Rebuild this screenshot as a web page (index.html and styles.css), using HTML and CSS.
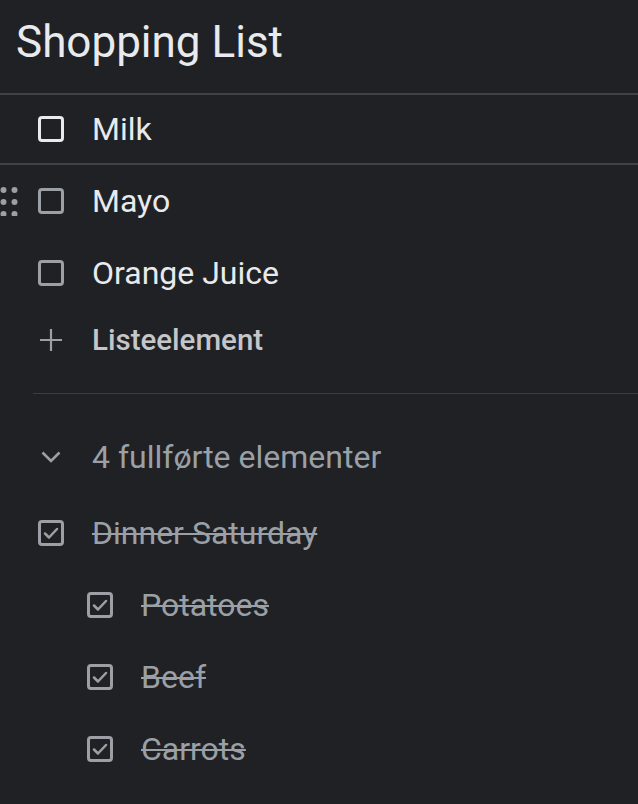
FILE: index.html
```html
<!DOCTYPE html>
<html lang="nb">
<head>
    <meta charset="UTF-8">
    <meta name="viewport" content="width=device-width, initial-scale=1.0">
    <title>Shopping List</title>
    <link rel="stylesheet" href="styles.css">
</head>
<body>
    <div class="note">
        <h1 class="title">Shopping List</h1>

        <div class="pinned">
            <div class="item">
                <span class="handle"></span>
                <svg class="box box-light" viewBox="0 0 26 26"><rect x="1.5" y="1.5" width="23" height="23" rx="2.5"/></svg>
                <span class="label">Milk</span>
            </div>
        </div>

        <div class="open">
            <div class="item">
                <span class="handle">
                    <svg viewBox="0 0 18 30" width="18" height="30">
                        <circle cx="3.5" cy="4" r="3"/><circle cx="14.5" cy="4" r="3"/>
                        <circle cx="3.5" cy="16" r="3"/><circle cx="14.5" cy="16" r="3"/>
                        <circle cx="3.5" cy="28" r="3"/><circle cx="14.5" cy="28" r="3"/>
                    </svg>
                </span>
                <svg class="box" viewBox="0 0 26 26"><rect x="1.5" y="1.5" width="23" height="23" rx="2.5"/></svg>
                <span class="label">Mayo</span>
            </div>
            <div class="item">
                <span class="handle"></span>
                <svg class="box" viewBox="0 0 26 26"><rect x="1.5" y="1.5" width="23" height="23" rx="2.5"/></svg>
                <span class="label">Orange Juice</span>
            </div>
            <div class="item add">
                <span class="handle"></span>
                <svg class="plus" viewBox="0 0 26 26"><path d="M13 2v22M2 13h22"/></svg>
                <span class="label">Listeelement</span>
            </div>
        </div>

        <div class="done">
            <div class="item done-head">
                <span class="handle"></span>
                <svg class="chevron" viewBox="0 0 26 26"><path d="M4.5 8.5l8.5 8.5 8.5-8.5"/></svg>
                <span class="label">4 fullførte elementer</span>
            </div>
            <div class="item checked">
                <span class="handle"></span>
                <svg class="box" viewBox="0 0 26 26"><rect x="1.5" y="1.5" width="23" height="23" rx="2.5"/><path class="tick" d="M7 13.5l4 4 8-8.5"/></svg>
                <span class="label">Dinner Saturday</span>
            </div>
            <div class="item checked child">
                <span class="handle"></span>
                <svg class="box" viewBox="0 0 26 26"><rect x="1.5" y="1.5" width="23" height="23" rx="2.5"/><path class="tick" d="M7 13.5l4 4 8-8.5"/></svg>
                <span class="label">Potatoes</span>
            </div>
            <div class="item checked child">
                <span class="handle"></span>
                <svg class="box" viewBox="0 0 26 26"><rect x="1.5" y="1.5" width="23" height="23" rx="2.5"/><path class="tick" d="M7 13.5l4 4 8-8.5"/></svg>
                <span class="label">Beef</span>
            </div>
            <div class="item checked child">
                <span class="handle"></span>
                <svg class="box" viewBox="0 0 26 26"><rect x="1.5" y="1.5" width="23" height="23" rx="2.5"/><path class="tick" d="M7 13.5l4 4 8-8.5"/></svg>
                <span class="label">Carrots</span>
            </div>
        </div>
    </div>
</body>
</html>
```

FILE: styles.css
```css
body {
    margin: 0;
    padding: 0;
    background: #202124;
    color: #e8eaed;
    font-family: Roboto, "Noto Sans", Arial, sans-serif;
    overflow: hidden;
}
.note {
    width: 638px;
}
.title {
    margin: 0;
    height: 95px;
    padding: 0 0 0 16px;
    box-sizing: border-box;
    font-size: 44px;
    font-weight: 400;
    line-height: 84px;
    color: #e8eaed;
    border-bottom: 2px solid #414246;
}
.pinned {
    border-bottom: 2px solid #414246;
}
.pinned .item {
    height: 68px;
}
.item {
    display: flex;
    align-items: center;
    height: 72px;
}
.handle {
    width: 38px;
    flex: none;
    display: flex;
    align-items: center;
}
.handle svg {
    fill: #9aa0a6;
}
.box {
    width: 26px;
    height: 26px;
    flex: none;
    fill: none;
    stroke: #9aa0a6;
    stroke-width: 3;
}
.box-light {
    stroke: #e8eaed;
}
.tick {
    stroke-width: 2.5;
    stroke-linecap: round;
    stroke-linejoin: round;
}
.plus,
.chevron {
    width: 26px;
    height: 26px;
    flex: none;
    fill: none;
    stroke: #9aa0a6;
    stroke-width: 2.2;
}
.chevron {
    stroke-width: 2.6;
}
.label {
    margin-left: 28px;
    font-size: 32px;
    white-space: nowrap;
}
.add {
    height: 62px;
}
.add .label {
    font-size: 29.5px;
    font-weight: 500;
    color: #c4c6c9;
}
.done {
    margin: 22px 0 0 33px;
    border-top: 1px solid #3c3d40;
    padding-top: 27px;
}
.done .handle {
    width: 5px;
}
.done-head {
    margin-bottom: 4px;
}
.done-head .label {
    color: #9aa0a6;
}
.checked .label {
    color: #9aa0a6;
    text-decoration: line-through;
    text-decoration-thickness: 2px;
}
.child {
    padding-left: 49px;
}
```
